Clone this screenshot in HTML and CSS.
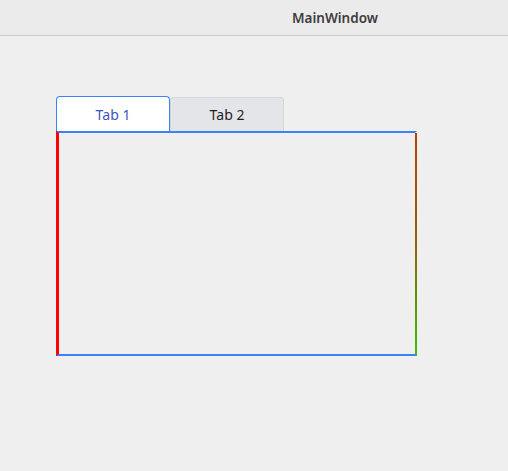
FILE: index.html
```html
<!DOCTYPE html>
<html lang="en">
<head>
	<meta charset="UTF-8">
	<title>MainWindow</title>
	<link rel="stylesheet" href="styles.css">
</head>
<body>
	<header class="titlebar">
		<span class="title">MainWindow</span>
	</header>
	<main class="content">
		<div class="tabs">
			<div class="tab active">Tab 1</div>
			<div class="tab">Tab 2</div>
		</div>
		<div class="pane"></div>
	</main>
</body>
</html>
```

FILE: styles.css
```css
html,body{
	margin: 0;
	width: 100%;
	height: 100%;
	overflow: hidden;
	background-color: #efefef;
	font-family: "Noto Sans", "DejaVu Sans", sans-serif;
}
.titlebar{
	display: flex;
	align-items: center;
	justify-content: center;
	height: 35px;
	padding-left: 162px;
	background-color: #ebebeb;
	border-bottom: 1px solid #cbcbcb;
}
.title{
	font-size: 13.5px;
	font-weight: 600;
	color: #3d3d3d;
}
.content{
	padding-top: 60px;
	padding-left: 56px;
}
.tabs{
	display: flex;
	align-items: flex-end;
	height: 35px;
}
.tab{
	box-sizing: border-box;
	display: flex;
	align-items: center;
	justify-content: center;
	width: 114px;
	height: 34px;
	font-size: 14px;
	color: #1e1e1e;
	background-color: #e4e5e9;
	border: 1px solid #d4d5d9;
	border-bottom: none;
	border-radius: 4px 4px 0 0;
}
.tab.active{
	height: 35px;
	color: #3a56c4;
	background-color: #fff;
	border-color: #3b82f6;
}
/* left red, right gradient */
.pane{
	box-sizing: border-box;
	width: 361px;
	height: 225px;
	border-top: 2px solid #3b82f6;
	border-bottom: 2px solid #3b82f6;
	border-left: 3px solid #ff0000;
	border-right: 2px solid transparent;
	background: linear-gradient(#c03c00, #8c6400 50%, #34c400) right top / 2px 100% no-repeat border-box, #efefef;
	background-origin: border-box;
}
```
